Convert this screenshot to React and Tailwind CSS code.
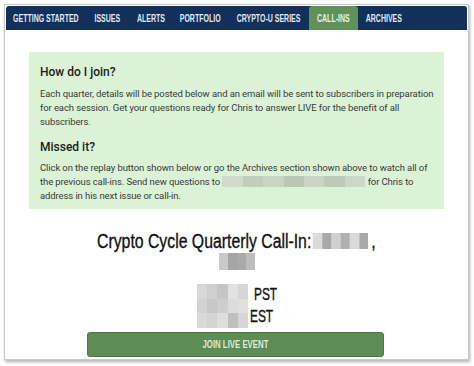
const navItems = [
  { label: "GETTING STARTED", w: "w-[78px]" },
  { label: "ISSUES", w: "w-[44px]" },
  { label: "ALERTS", w: "w-[43px]" },
  { label: "PORTFOLIO", w: "w-[56px]" },
  { label: "CRYPTO-U SERIES", w: "w-[81px]" },
  { label: "CALL-INS", w: "w-[49px]", active: true },
  { label: "ARCHIVES", w: "w-[52px]" },
];

const narrow = { fontFamily: '"Liberation Sans", Arial, sans-serif' };

const Blur = ({ cells, className }) => (
  <span className={`inline-flex ${className}`}>
    {cells.map((c, i) => (
      <span key={i} className="h-full flex-1" style={{ background: c }} />
    ))}
  </span>
);

const App = () => {
  return (
    <div className="w-[474px] h-[366px] bg-white pt-[4px] pl-[4px] pr-[5px] pb-[6px]">
      <div className="h-full border border-[#c8c8c8] shadow-[1px_2px_3px_rgba(0,0,0,0.3)] bg-white flex flex-col p-[1px]">
        <nav
          className="flex items-stretch h-[24px] bg-[#13305a] rounded-t-[3px] pl-[1px] text-[10px] font-bold text-[#dfe8f3]"
          style={narrow}
        >
          {navItems.map((item) => (
            <div
              key={item.label}
              className={`flex items-center justify-center shrink-0 ${item.w} ${item.active ? "bg-[#5f9158] rounded-t-[3px] text-[#e8f3e4]" : ""}`}
            >
              <span className="inline-block whitespace-nowrap scale-x-[0.7]">{item.label}</span>
            </div>
          ))}
        </nav>

        <div className="flex flex-col items-center" style={{ fontFamily: "Roboto, sans-serif" }}>
          <div className="mt-[22px] w-[415px] bg-[#dbf2d6] pl-[11px] pr-[6px] pt-[11px] pb-[6px] text-[#3a3a3a]">
            <h2 className="text-[12px] font-medium text-[#1c1c1c] leading-[18px]">How do I join?</h2>
            <p className="mt-[6px] text-[9.5px] leading-[14px] tracking-[-0.1px]">
              Each quarter, details will be posted below and an email will be sent to subscribers in preparation for
              each session. Get your questions ready for Chris to answer LIVE for the benefit of all subscribers.
            </p>
            <h2 className="mt-[9px] text-[12px] font-medium text-[#1c1c1c] leading-[18px]">Missed it?</h2>
            <p className="mt-[5px] text-[9.5px] leading-[14px] tracking-[-0.1px]">
              Click on the replay button shown below or go the Archives section shown above to watch all of the
              previous call-ins. Send new questions to{" "}
              <Blur
                className="w-[143px] h-[11px] align-[-2px]"
                cells={["#cfdccb", "#bfcfbb", "#c7d5c3", "#b8c8b4", "#c9d6c5", "#bccbb8", "#cbd8c7"]}
              />{" "}
              for Chris to address in his next issue or call-in.
            </p>
          </div>

          <div
            className="mt-[20px] flex flex-col items-center text-[#111] [-webkit-text-stroke:0.35px_#111]"
            style={narrow}
          >
            <div className="h-[24px] flex items-center justify-center">
              <span className="inline-flex items-center whitespace-nowrap scale-x-[0.79] text-[20px] leading-[24px]">
                <span>Crypto Cycle Quarterly Call-In:</span>
                <Blur
                  className="w-[70px] h-[16px] ml-[2px] mr-[4px]"
                  cells={["#dadada", "#a9a9a9", "#d0d0d0", "#b0b0b0", "#dadada", "#a8a8a8"]}
                />
                <span>,</span>
              </span>
            </div>
            <Blur className="w-[36px] h-[17px]" cells={["#c9c9c9", "#a5a5a5", "#a9a9a9", "#bdbdbd"]} />

            <div className="mt-[14px] flex items-stretch">
              <span className="w-[52px] h-[44px] grid grid-cols-5 grid-rows-3">
                {["#d8d8d8", "#cfcfcf", "#c6c6c6", "#e2e2e2", "#d5d5d5", "#d2d2d2", "#c8c8c8", "#cecece", "#dcdcdc", "#e0e0e0", "#d9d9d9", "#d4d4d4", "#dedede", "#bfbfbf", "#d6d6d6"].map((c, i) => (
                  <span key={i} style={{ background: c }} />
                ))}
              </span>
              <div className="flex flex-col text-[17px] leading-[22px] w-[28px]">
                <span className="inline-block origin-left scale-x-[0.7] ml-[5px]">PST</span>
                <span className="inline-block origin-left scale-x-[0.7] ml-[1px]">EST</span>
              </div>
            </div>
          </div>

          <button
            className="mt-[4px] ml-[-2px] w-[297px] h-[25px] bg-[#5d8c55] border border-[#4d7647] rounded-[3px] text-[11px] font-bold text-[#dcebd8] flex items-center justify-center"
            style={narrow}
          >
            <span className="inline-block scale-x-[0.71]">JOIN LIVE EVENT</span>
          </button>
        </div>
      </div>
    </div>
  );
};

export default App;
